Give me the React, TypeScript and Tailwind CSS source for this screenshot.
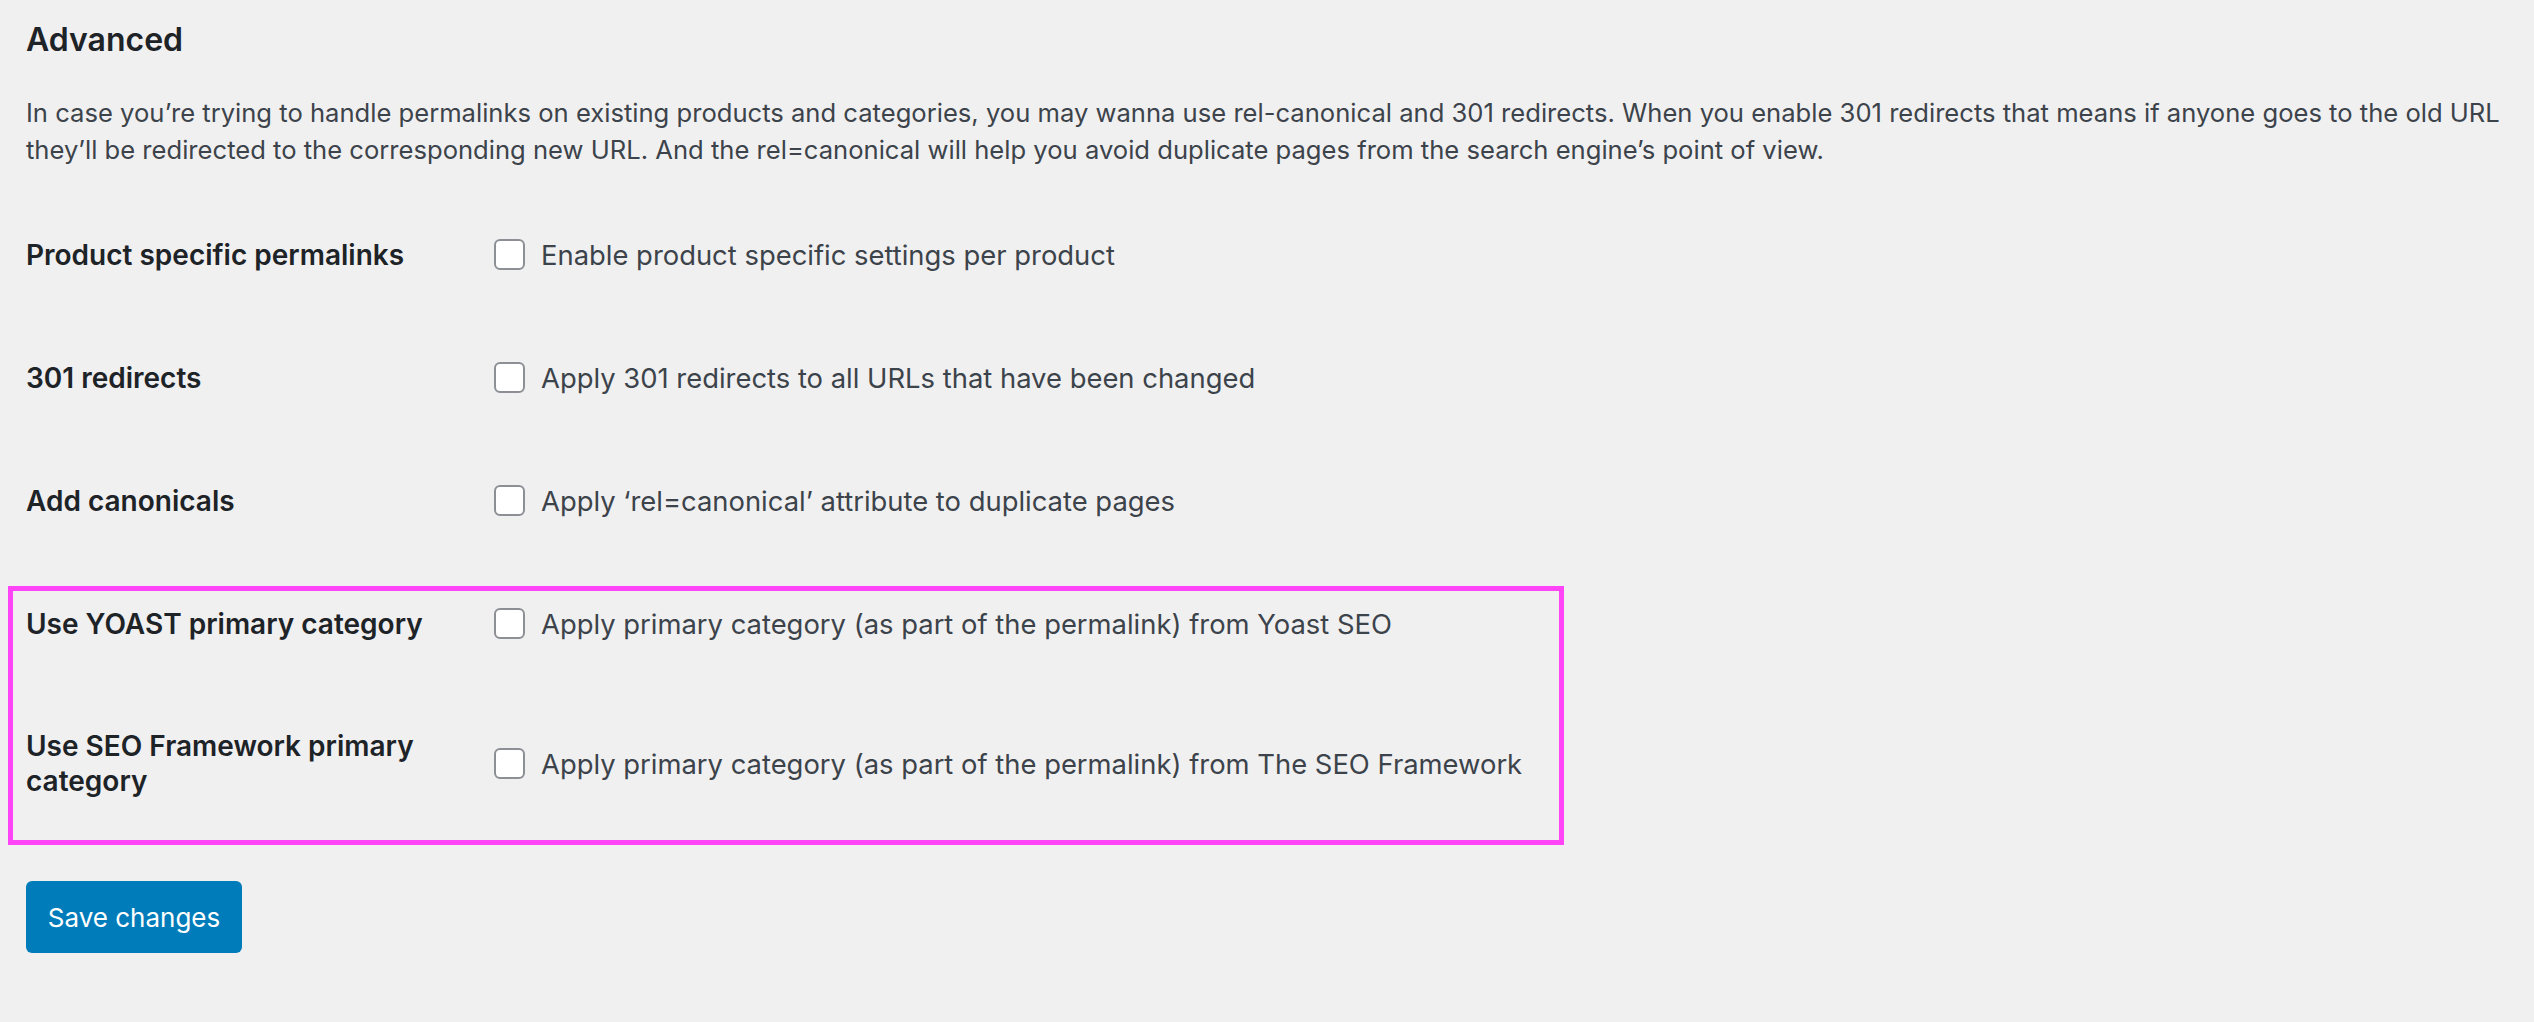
import React from 'react';

const font = { fontFamily: 'Inter, "Noto Sans", sans-serif' };

function Checkbox() {
  return (
    <span className="inline-block w-[31px] h-[31px] shrink-0 rounded-[6px] border-2 border-[#8c8f94] bg-white" />
  );
}

function Row({ label, text }: { label: React.ReactNode; text: string }) {
  return (
    <div className="grid grid-cols-[468px_1fr] items-center py-[43.5px]">
      <div className="text-[28px] leading-[36px] font-semibold text-[#1d2327] pr-6">{label}</div>
      <label className="flex items-center gap-4 text-[27.4px] leading-[36px] text-[#3c434a]">
        <Checkbox />
        <span>{text}</span>
      </label>
    </div>
  );
}

export default function App() {
  return (
    <div className="min-h-screen bg-[#f0f0f1] px-[26px] pt-[18px]" style={font}>
      <h2 className="text-[32px] leading-[44px] font-semibold text-[#1d2327]">Advanced</h2>
      <p className="mt-[32px] text-[25.6px] leading-[37px] text-[#3c434a]">
        <span className="block whitespace-nowrap">
          In case you’re trying to handle permalinks on existing products and categories, you may wanna use rel-canonical and 301 redirects. When you enable 301 redirects that means if anyone goes to the old URL
        </span>
        <span className="block whitespace-nowrap">
          they’ll be redirected to the corresponding new URL. And the rel=canonical will help you avoid duplicate pages from the search engine’s point of view.
        </span>
      </p>

      <div className="mt-[25px]">
        <Row label="Product specific permalinks" text="Enable product specific settings per product" />
        <Row label="301 redirects" text="Apply 301 redirects to all URLs that have been changed" />
        <Row label="Add canonicals" text="Apply ‘rel=canonical’ attribute to duplicate pages" />
        <div className="relative">
          <Row label="Use YOAST primary category" text="Apply primary category (as part of the permalink) from Yoast SEO" />
          <Row
            label={
              <span className="block leading-[35px]">
                Use SEO Framework primary
                <br />
                category
              </span>
            }
            text="Apply primary category (as part of the permalink) from The SEO Framework"
          />
          <div className="pointer-events-none absolute left-[-18px] top-[24px] bottom-[-3px] w-[1556px] border-[5px] border-[#ff45f7]" />
        </div>
      </div>

      <div className="mt-[39px]">
        <button className="h-[72px] w-[216px] rounded-[6px] bg-[#007cba] text-[26px] text-white">
          Save changes
        </button>
      </div>
    </div>
  );
}
